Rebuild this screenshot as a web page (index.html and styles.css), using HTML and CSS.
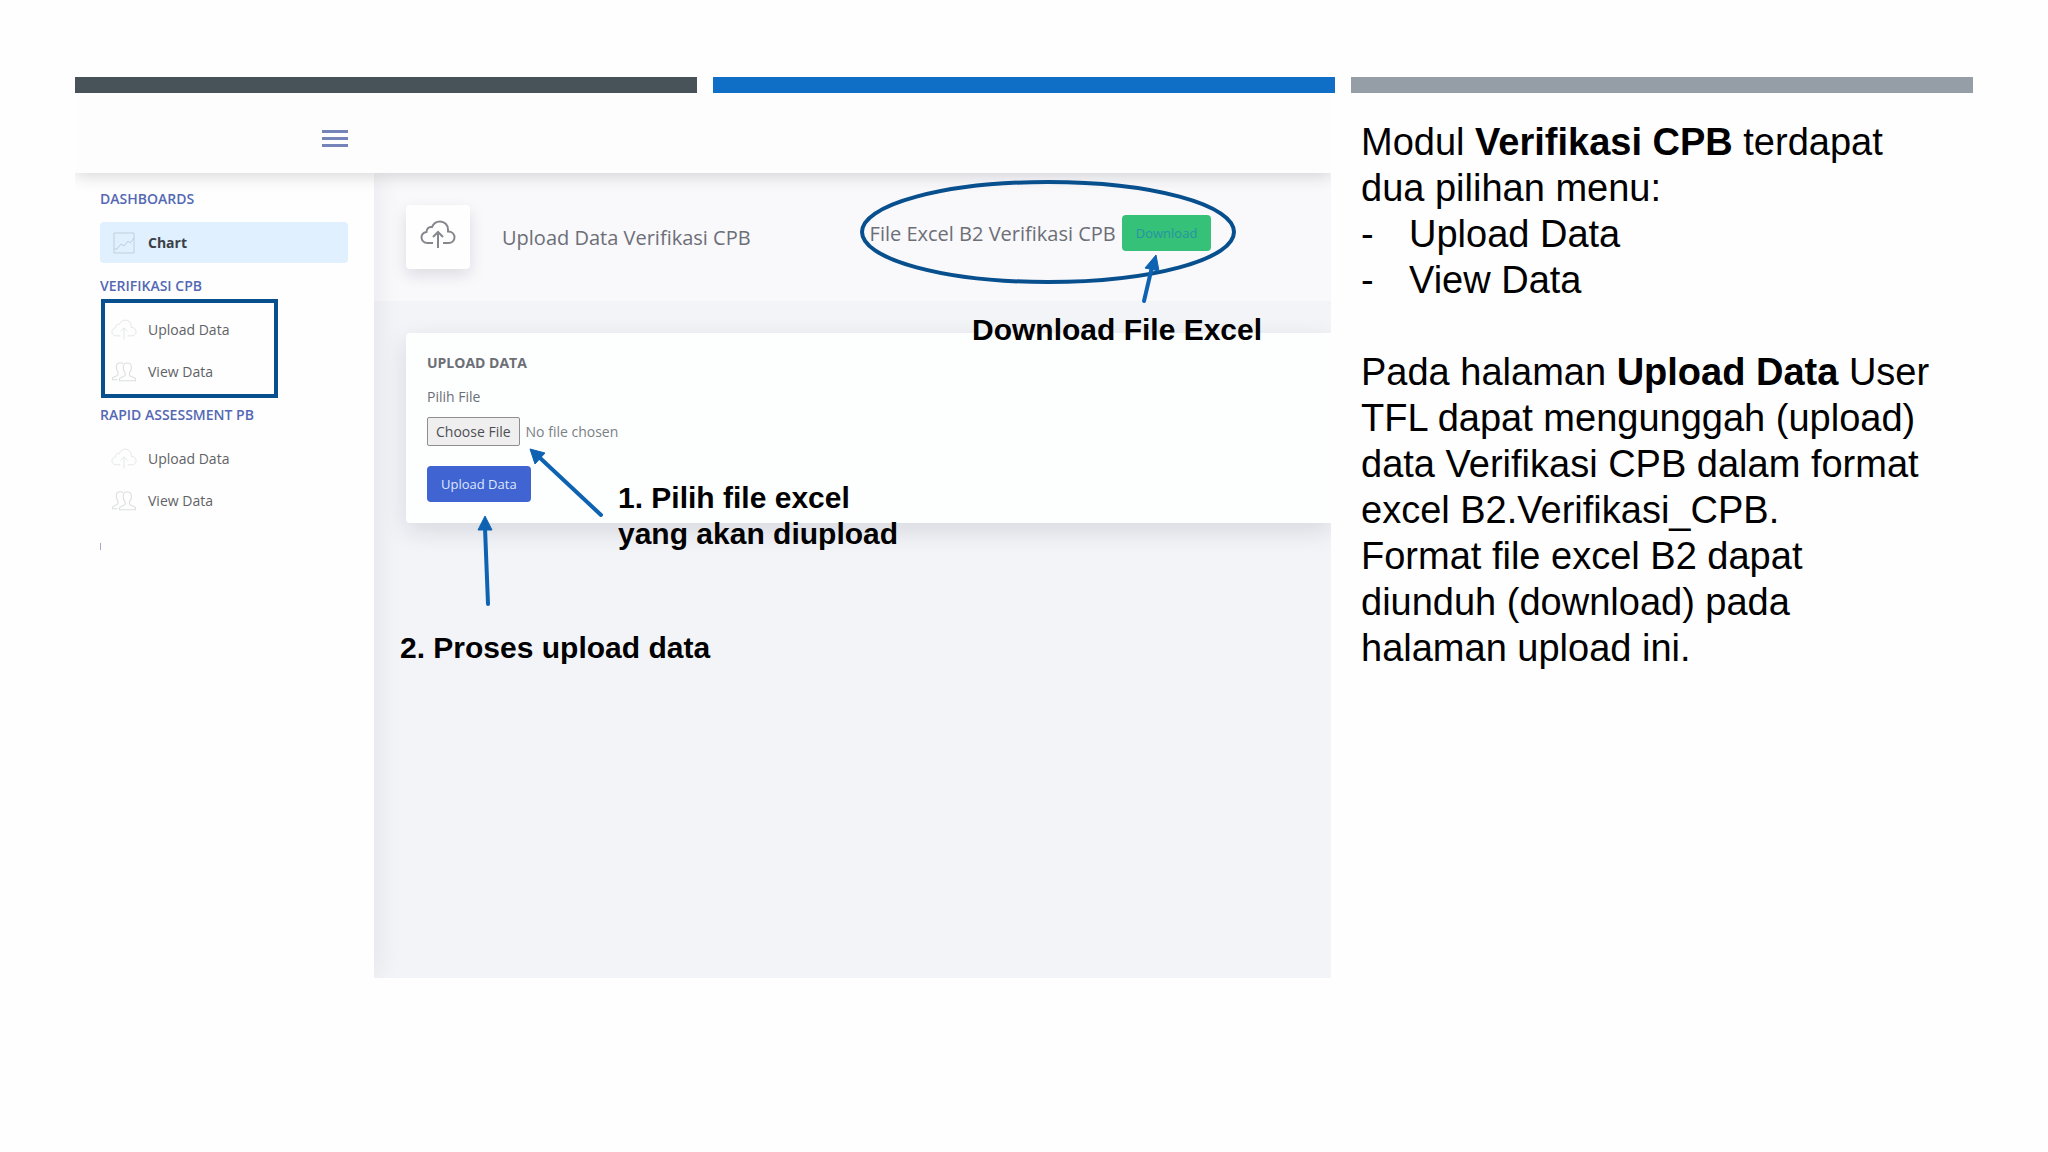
FILE: index.html
```html
<!DOCTYPE html>
<html lang="id">
<head>
    <meta charset="UTF-8">
    <meta name="viewport" content="width=device-width, initial-scale=1.0">
    <title>Modul Verifikasi CPB</title>
    <link rel="stylesheet" href="styles.css">
</head>
<body>
    <!-- shared icons -->
    <svg class="sprite" aria-hidden="true">
        <symbol id="icon-cloud" viewBox="0 0 36 30">
            <path d="M13 23H7.500C4 23 1.500 20.500 1.500 17.500S4 12.500 6.500 12C6.500 8.500 9 6.500 12 7C13.500 3.500 16.500 1.500 20 1.500C24.500 1.500 28 5 28 9.500V11.500C32 11.500 34.500 14 34.500 17.300S32 23 28.500 23H23"/>
            <path d="M18 28V12.500M13 17L18 12L23 17"/>
        </symbol>
        <symbol id="icon-users" viewBox="0 0 24 20">
            <path d="M8 18H22.500V16C21 14.500 18 14.500 17 13V10.500C18.500 9 19 7 18.500 4.500C18 1 12 1 11.500 4.500C11 7 11.500 9 13 10.500V13C12 14.500 9 14.500 8 16Z"/>
            <path d="M11 2.500C8.500 .5 5 2 5 5C5 8 5.500 9 6.500 10V12.500C5.500 14 2.500 14 1.500 15.500V17H6"/>
        </symbol>
        <symbol id="icon-chart" viewBox="0 0 22 22">
            <path d="M1 1H21V21H1ZM1 17H4L8 12L11 14L15 9L17 11L21 6"/>
        </symbol>
    </svg>

    <div class="slide">
        <div class="bar bar-dark"></div>
        <div class="bar bar-blue"></div>
        <div class="bar bar-gray"></div>

        <div class="app">
            <header class="app-header">
                <button type="button" class="hamburger" aria-label="Menu">
                    <span></span><span></span><span></span>
                </button>
            </header>

            <div class="app-body">
                <nav class="sidebar">
                    <h2>DASHBOARDS</h2>
                    <a href="#" class="active"><svg class="icon"><use href="#icon-chart"/></svg>Chart</a>
                    <h2>VERIFIKASI CPB</h2>
                    <a href="#"><svg class="icon"><use href="#icon-cloud"/></svg>Upload Data</a>
                    <a href="#"><svg class="icon"><use href="#icon-users"/></svg>View Data</a>
                    <h2>RAPID ASSESSMENT PB</h2>
                    <a href="#"><svg class="icon"><use href="#icon-cloud"/></svg>Upload Data</a>
                    <a href="#"><svg class="icon"><use href="#icon-users"/></svg>View Data</a>
                    <div class="menu-end"></div>
                </nav>

                <main class="main">
                    <div class="page-title">
                        <div class="title-icon"><svg><use href="#icon-cloud"/></svg></div>
                        <h1>Upload Data Verifikasi CPB</h1>
                        <div class="download">
                            <span>File Excel B2 Verifikasi CPB</span>
                            <a href="#" class="btn btn-success">Download</a>
                        </div>
                    </div>

                    <form class="card">
                        <h2>UPLOAD DATA</h2>
                        <label for="file">Pilih File</label>
                        <input type="file" id="file" name="file">
                        <button type="button" class="btn btn-primary">Upload Data</button>
                    </form>
                </main>
            </div>

            <!-- notes drawn over the app -->
            <svg class="marks">
                <rect class="outline" x="28" y="208" width="173" height="95"/>
                <ellipse class="outline" cx="973" cy="139" rx="186" ry="50"/>
                <g class="arrow">
                    <path d="M1069 208L1077 174"/>
                    <polygon points="1081,162 1084,178 1070,175"/>
                    <path d="M526 422L464 364"/>
                    <polygon points="455,356 470,360 460,371"/>
                    <path d="M413 511L410 435"/>
                    <polygon points="410,423 417,437 403,437"/>
                </g>
            </svg>
            <p class="note note-download">Download File Excel</p>
            <p class="note note-file">1. Pilih file excel<br>yang akan diupload</p>
            <p class="note note-upload">2. Proses upload data</p>
        </div>

        <div class="text">
            <p>Modul <b>Verifikasi CPB</b> terdapat dua pilihan menu:</p>
            <ul>
                <li>Upload Data</li>
                <li>View Data</li>
            </ul>
            <p>Pada halaman <b>Upload Data</b> User TFL dapat mengunggah (upload) data Verifikasi CPB dalam format excel B2.Verifikasi_CPB.</p>
            <p>Format file excel B2 dapat diunduh (download) pada halaman upload ini.</p>
        </div>
    </div>
</body>
</html>
```

FILE: styles.css
```css
* {
    box-sizing: border-box;
}
body {
    margin: 0;
    background: #fefefe;
    font-family: "Open Sans", "Noto Sans", sans-serif;
    font-size: 14px;
    color: #6c6f76;
}
h1, h2, p, ul {
    margin: 0;
    padding: 0;
}
.sprite {
    display: none;
}
.slide {
    display: grid;
    grid-template-columns: repeat(3, 1fr);
    column-gap: 16px;
    padding: 77px 75px;
}
.bar {
    height: 16px;
}
.bar-dark {
    background: #475359;
}
.bar-blue {
    background: #0f6fc6;
}
.bar-gray {
    background: #959da6;
}

/* app */
.app {
    grid-column: span 2;
    position: relative;
    display: flex;
    flex-direction: column;
    min-height: 885px;
    margin-right: 4px;
    overflow: hidden;
}
.app-header {
    position: relative;
    z-index: 2;
    display: flex;
    align-items: center;
    height: 80px;
    padding: 10px 0 0 247px;
    background: #fdfdfe;
    box-shadow: 0 2px 16px rgba(40, 40, 50, 0.2);
}
.hamburger {
    display: flex;
    flex-direction: column;
    gap: 4px;
    width: 26px;
    padding: 0;
    border: 0;
    background: none;
}
.hamburger span {
    height: 3px;
    background: #7484b8;
}
.app-body {
    display: flex;
    flex: 1;
}
.sidebar {
    position: relative;
    z-index: 1;
    width: 299px;
    padding: 4px 26px 0 25px;
    background: #fefefe;
    box-shadow: 6px 0 24px rgba(8, 10, 37, 0.06);
}
.sidebar h2 {
    font-size: 14px;
    font-weight: 600;
    line-height: 44px;
    color: #5468b4;
    white-space: nowrap;
}
.sidebar a {
    display: flex;
    align-items: center;
    gap: 10px;
    height: 41px;
    margin: 1px 0;
    padding-left: 10px;
    border-radius: 4px;
    color: #5f6266;
    text-decoration: none;
}
.sidebar a.active {
    background: #e0f0fe;
    color: #3a4048;
    font-weight: 700;
}
.icon {
    width: 28px;
    height: 22px;
    fill: none;
    stroke: #dcdee0;
    stroke-width: 1;
}
.active .icon {
    stroke: #bfcfda;
}
.menu-end {
    width: 1px;
    height: 7px;
    margin-top: 22px;
    background: #a3a8cc;
}
.main {
    flex: 1;
    min-width: 0;
    background: #f3f4f8;
}
.page-title {
    display: flex;
    align-items: center;
    height: 128px;
    padding-left: 32px;
    background: #f9f8fb;
}
.title-icon {
    display: flex;
    align-items: center;
    justify-content: center;
    width: 64px;
    height: 64px;
    padding-bottom: 4px;
    border-radius: 4px;
    background: #fefefe;
    box-shadow: 0 6px 16px rgba(20, 20, 40, 0.12);
}
.title-icon svg {
    width: 36px;
    height: 30px;
    fill: none;
    stroke: #85878c;
    stroke-width: 2;
}
.page-title h1 {
    margin-left: 32px;
    font-size: 20px;
    font-weight: 400;
}
.download {
    display: flex;
    align-items: center;
    gap: 6px;
    margin-left: 119px;
    padding-bottom: 8px;
    font-size: 20px;
}
.btn {
    border: 0;
    border-radius: 4px;
    padding: 0 14px;
    font-family: inherit;
    font-size: 13px;
    line-height: 36px;
    text-decoration: none;
}
.btn-success {
    background: #35c177;
    color: #2892a6;
}
.btn-primary {
    background: #4064d2;
    color: #dfe7fb;
}
.card {
    display: flex;
    flex-direction: column;
    align-items: flex-start;
    height: 190px;
    margin: 32px 0 0 32px;
    padding: 20px 21px;
    border-radius: 4px 0 0 4px;
    background: #fdfefe;
    box-shadow: 0 8px 24px rgba(20, 25, 45, 0.12);
}
.card h2 {
    font-size: 14px;
    font-weight: 700;
    line-height: 20px;
}
.card label {
    margin-top: 14px;
    line-height: 20px;
}
.card input {
    margin: 10px 0 20px;
    font-family: inherit;
    font-size: 14px;
    color: #7b7e84;
}
.card input::file-selector-button {
    height: 29px;
    margin-right: 6px;
    padding: 0 8px;
    border: 1px solid #8e8e90;
    border-radius: 2px;
    background: #efefef;
    font-family: inherit;
    font-size: 14px;
    color: #4e4e52;
}

/* notes */
.marks {
    position: absolute;
    z-index: 3;
    top: 0;
    left: 0;
    width: 100%;
    height: 100%;
    pointer-events: none;
}
.outline {
    fill: none;
    stroke: #084f8e;
    stroke-width: 4;
}
.arrow {
    fill: #0e62b2;
    stroke: #0e62b2;
}
.arrow path {
    stroke-width: 4;
    stroke-linecap: round;
}
.note {
    position: absolute;
    z-index: 3;
    font-family: "Liberation Sans", Arial, sans-serif;
    font-size: 30px;
    font-weight: 700;
    line-height: 36px;
    color: #000;
    white-space: nowrap;
}
.note-download {
    top: 219px;
    left: 897px;
}
.note-file {
    top: 387px;
    left: 543px;
}
.note-upload {
    top: 537px;
    left: 325px;
}

/* description */
.text {
    padding: 26px 32px 0 10px;
    font-family: "Liberation Sans", Arial, sans-serif;
    font-size: 38px;
    line-height: 46px;
    color: #000;
}
.text ul {
    margin-bottom: 46px;
    list-style: none;
}
.text li {
    display: flex;
}
.text li::before {
    content: "-";
    width: 48px;
}
```
